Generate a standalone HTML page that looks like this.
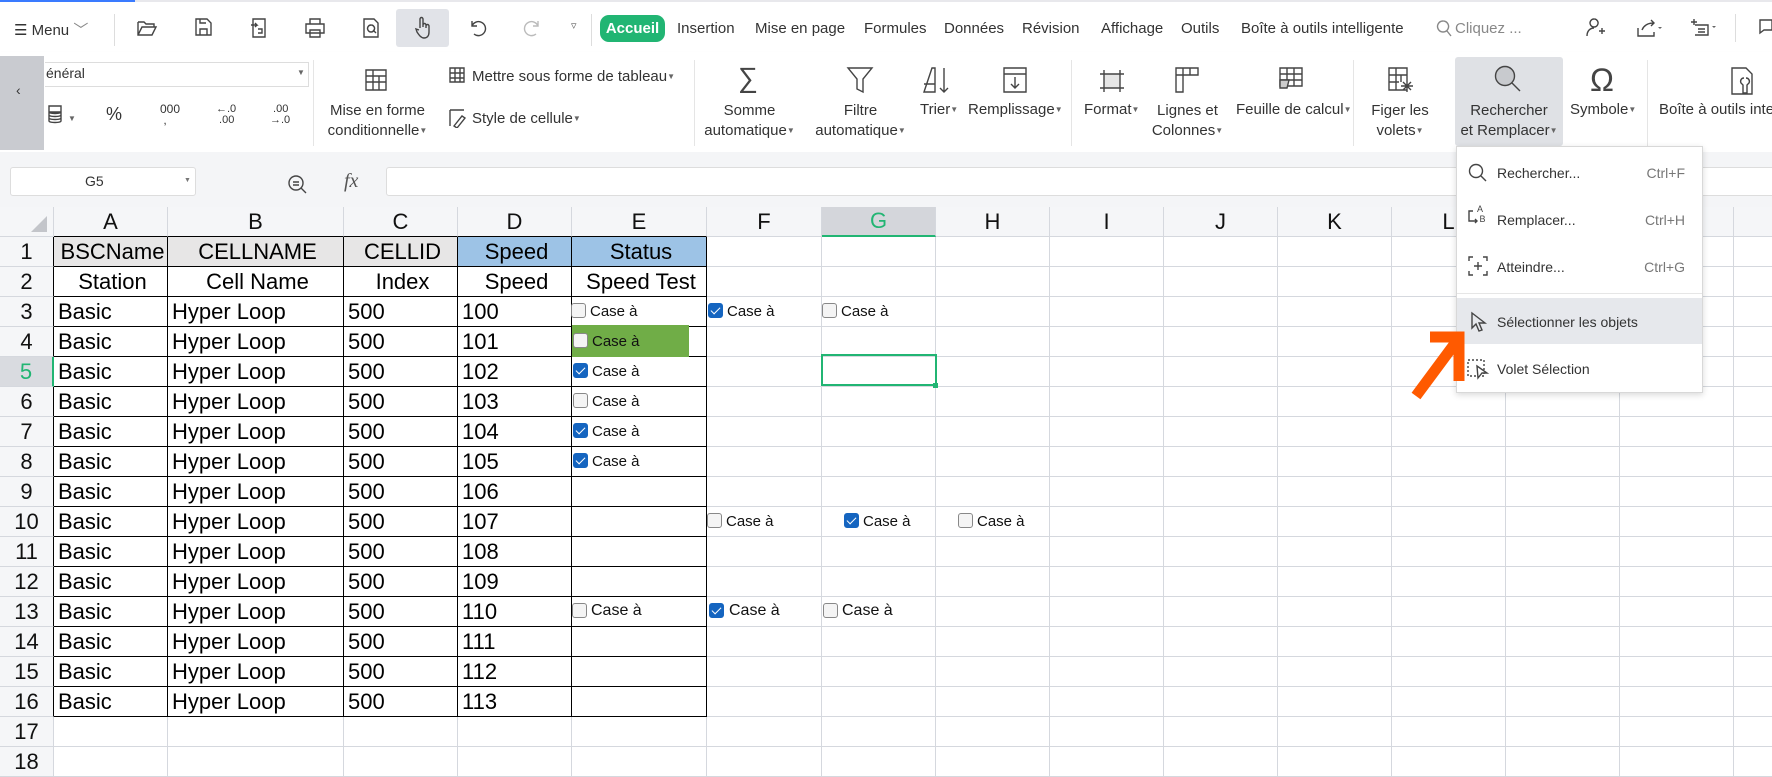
<!DOCTYPE html>
<html><head><meta charset="utf-8">
<style>
*{box-sizing:border-box;margin:0;padding:0}
body{width:1772px;height:772px;overflow:hidden;background:#fff;font-family:"Liberation Sans",sans-serif;color:#333;position:relative}
.a{position:absolute;white-space:nowrap}
.t{font-size:14px;color:#333}
.c{text-align:center}
svg{position:absolute;fill:none;stroke:#444;stroke-width:1.4}
table{position:absolute;left:0;top:207px;width:1848px;border-collapse:separate;border-spacing:0;table-layout:fixed;font-size:22px;color:#000}
td{height:30px;border-right:1px solid #d5d8de;border-bottom:1px solid #d5d8de;padding:0 0 0 4px;overflow:hidden;white-space:nowrap;line-height:28px}
tr.h td{height:29px;background:#f5f6f8;text-align:center;padding:0;color:#111}
td.r{background:#f5f6f8;text-align:center;padding:0;color:#111}
td.b{border-right:1px solid #000;border-bottom:1px solid #000}
td.bl{border-right:1px solid #000}
tr.h td.bt{border-bottom:1px solid #000}
td.g{background:#e7e6e6;text-align:center}
td.bl2{background:#9dc3e6;text-align:center}
.cb{position:absolute;width:15px;height:15px;border:1px solid #888;border-radius:3px;background:#f4f4f4}
.cb.k{background:#1565c0;border-color:#1565c0}
.cb.k:after{content:"";position:absolute;left:4px;top:1px;width:4px;height:8px;border:solid #fff;border-width:0 1.5px 1.5px 0;transform:rotate(45deg)}
.cl{position:absolute;font-size:15px;color:#111}
.mi{position:absolute;left:1497px;font-size:14px;color:#333}
.sc{position:absolute;right:87px;font-size:14px;color:#777}
.dd{font-size:8px;color:#666;vertical-align:2px}
</style></head><body>
<!-- top bar -->
<div class="a" style="left:0;top:0;width:1772px;height:2px;background:#e8e8ec"></div>
<div class="a" style="left:0;top:0;width:135px;height:2px;background:#3a7bff"></div>
<div class="a t" style="left:14px;top:19px;font-size:15px">☰ Menu <span style="color:#888">﹀</span></div>
<div class="a" style="left:114px;top:14px;width:1px;height:32px;background:#ddd"></div>
<svg style="left:136px;top:18px" width="22" height="20"><path d="M2 4h6l2 2h8v3M2 4v13h14l4-8H6l-4 8"/></svg>
<svg style="left:193px;top:17px" width="20" height="20"><path d="M3 2h11l4 4v12H3z M7 18v-6h7v6 M7 2v4h6"/></svg>
<svg style="left:249px;top:17px" width="20" height="22"><path d="M4 2h12v18H4z M2 8h6l-2-2m2 2-2 2 M9 12h4v4h-4"/></svg>
<svg style="left:304px;top:17px" width="22" height="22"><path d="M6 2h10v5H6z M2 7h18v9H2z M6 13h10v7H6z"/></svg>
<svg style="left:361px;top:17px" width="20" height="22"><path d="M3 2h10l4 4v14H3z M10 8a3.5 3.5 0 1 0 0.1 0 M12 13l3 3"/></svg>
<div class="a" style="left:396px;top:9px;width:53px;height:38px;background:#e1e3e8;border-radius:3px"></div>
<svg style="left:413px;top:16px" width="20" height="24"><path d="M7 12V3a1.5 1.5 0 0 1 3 0v8 M10 9a1.5 1.5 0 0 1 3 0v3 M13 10a1.5 1.5 0 0 1 3 0v6c0 4-2 6-5 6s-5-3-7-6l-1-3 3 1"/></svg>
<svg style="left:468px;top:18px" width="20" height="20"><path d="M4 3v5h5 M4 8a7 7 0 1 1 2 8"/></svg>
<svg style="left:522px;top:18px;stroke:#bbb" width="20" height="20"><path d="M16 3v5h-5 M16 8a7 7 0 1 0-2 8"/></svg>
<div class="a" style="left:571px;top:19px;font-size:11px;color:#666">▿</div>
<div class="a" style="left:591px;top:14px;width:1px;height:32px;background:#ddd"></div>
<div class="a" style="left:600px;top:15px;width:65px;height:27px;background:#21b573;border-radius:9px;color:#fff;font-weight:bold;font-size:15px;line-height:27px;text-align:center">Accueil</div>
<div class="a t" style="left:677px;top:20px;font-size:15px">Insertion</div>
<div class="a t" style="left:755px;top:20px;font-size:15px">Mise en page</div>
<div class="a t" style="left:864px;top:20px;font-size:15px">Formules</div>
<div class="a t" style="left:944px;top:20px;font-size:15px">Données</div>
<div class="a t" style="left:1022px;top:20px;font-size:15px">Révision</div>
<div class="a t" style="left:1101px;top:20px;font-size:15px">Affichage</div>
<div class="a t" style="left:1181px;top:20px;font-size:15px">Outils</div>
<div class="a t" style="left:1241px;top:20px;font-size:15px">Boîte à outils intelligente</div>
<svg style="left:1436px;top:19px;stroke:#888" width="16" height="18"><path d="M7 2a5.5 5.5 0 1 0 .1 0 M11 12l4 5"/></svg>
<div class="a t" style="left:1455px;top:20px;font-size:15px;color:#888">Cliquez ...</div>
<svg style="left:1585px;top:16px" width="20" height="22"><path d="M9 3a4 4 0 1 0 .1 0 M2 20c0-5 3-8 7-8 M14 15h6 M17 12v6"/></svg>
<svg style="left:1636px;top:18px" width="28" height="20"><path d="M2 10v8h16v-4 M6 12c2-5 6-7 12-7 M15 2l3 3-3 3"/><path d="M22 9l2 2 2-2" style="fill:#666;stroke:none"/></svg>
<svg style="left:1690px;top:16px" width="30" height="22"><path d="M4 3v6 M1 6h6 M5 9h13v10H5 M8 13h7 M8 16h7"/><path d="M22 10l2 2 2-2" style="fill:#666;stroke:none"/></svg>
<div class="a" style="left:1735px;top:14px;width:1px;height:28px;background:#ddd"></div>
<svg style="left:1758px;top:18px" width="14" height="18"><path d="M2 2h12v10H6l-4 3z"/></svg>

<!-- ribbon -->
<div class="a" style="left:0;top:52px;width:1772px;height:100px;background:#fff;box-shadow:0 2px 3px rgba(0,0,0,.08)"></div>
<div class="a" style="left:0;top:56px;width:44px;height:94px;background:#c9cbd0"></div>
<div class="a" style="left:16px;top:82px;font-size:14px;color:#333">‹</div>
<div class="a" style="left:45px;top:62px;width:264px;height:25px;border:1px solid #ddd;border-left:none"></div>
<div class="a t" style="left:46px;top:65px">énéral</div>
<div class="a" style="left:297px;top:68px;font-size:8px;color:#666">▼</div>
<svg style="left:46px;top:104px" width="18" height="20"><path d="M3 2h12v6H3z M3 8c0 2 12 2 12 0 M3 11c0 2 12 2 12 0 M3 14c0 2 12 2 12 0 M3 8v9c0 2 12 2 12 0V8"/></svg>
<div class="a dd" style="left:68px;top:114px">▼</div>
<div class="a" style="left:106px;top:104px;font-size:18px;color:#333">%</div>
<div class="a" style="left:160px;top:104px;font-size:12px;color:#333;line-height:11px">000<br>&nbsp;,</div>
<div class="a" style="left:216px;top:104px;font-size:11px;color:#333;line-height:11px">←.0<br>&nbsp;.00</div>
<div class="a" style="left:270px;top:104px;font-size:11px;color:#333;line-height:11px">&nbsp;.00<br>→.0</div>
<div class="a" style="left:313px;top:60px;width:1px;height:86px;background:#e5e5e5"></div>
<svg style="left:364px;top:68px" width="24" height="24"><path d="M2 2h20v20H2z M2 8h20 M2 14h20 M9 2v20 M15 8v14"/></svg>
<div class="a t c" style="left:320px;top:101px;width:115px;font-size:15px;line-height:20px">Mise en forme<br>conditionnelle<span class="dd">▼</span></div>
<svg style="left:448px;top:66px" width="20" height="20"><path d="M2 2h14v14H2z M2 7h14 M2 12h14 M7 2v14 M12 2v14"/></svg>
<div class="a t" style="left:472px;top:68px;font-size:15px">Mettre sous forme de tableau<span class="dd">▼</span></div>
<svg style="left:448px;top:108px" width="20" height="20"><path d="M2 2h14 M2 2v16 M6 18l8-10 3 2-8 10z"/></svg>
<div class="a t" style="left:472px;top:110px;font-size:15px">Style de cellule<span class="dd">▼</span></div>
<div class="a" style="left:694px;top:60px;width:1px;height:86px;background:#e5e5e5"></div>
<div class="a" style="left:738px;top:62px;font-size:28px;color:#444">∑</div>
<div class="a t c" style="left:697px;top:101px;width:105px;font-size:15px;line-height:20px">Somme<br>automatique<span class="dd">▼</span></div>
<svg style="left:846px;top:66px" width="28" height="28"><path d="M2 2h24l-9 11v13l-6-3V13z"/></svg>
<div class="a t c" style="left:808px;top:101px;width:105px;font-size:15px;line-height:20px">Filtre<br>automatique<span class="dd">▼</span></div>
<svg style="left:922px;top:66px" width="30" height="28"><path d="M2 26L10 2l3 0v24z M2 18h11 M22 2v24 M18 22l4 4 4-4"/></svg>
<div class="a t" style="left:920px;top:101px;font-size:15px">Trier<span class="dd">▼</span></div>
<svg style="left:1002px;top:66px" width="26" height="28"><path d="M2 2h22v24H2z M2 8h22 M13 11v11 M9 18l4 4 4-4"/></svg>
<div class="a t" style="left:968px;top:101px;font-size:15px">Remplissage<span class="dd">▼</span></div>
<div class="a" style="left:1071px;top:60px;width:1px;height:86px;background:#e5e5e5"></div>
<svg style="left:1098px;top:68px" width="28" height="26"><path d="M6 6h16v14H6z" style="fill:#e6e6e6;stroke:none"/><path d="M6 2v22 M22 2v22 M2 6h24 M2 20h24" /></svg>
<div class="a t" style="left:1084px;top:101px;font-size:15px">Format<span class="dd">▼</span></div>
<svg style="left:1174px;top:66px" width="26" height="28"><path d="M2 2h22v7H2z M2 9v17h7V2 M16 2v7"/></svg>
<div class="a t c" style="left:1140px;top:101px;width:95px;font-size:15px;line-height:20px">Lignes et<br>Colonnes<span class="dd">▼</span></div>
<svg style="left:1278px;top:66px" width="26" height="28"><path d="M2 2h22v18H2z M2 8h22 M2 14h22 M9 2v18 M16 2v18"/><path d="M2 14h9l-2 8H2z" style="fill:#ccc;stroke:#444"/></svg>
<div class="a t" style="left:1236px;top:101px;font-size:15px">Feuille de calcul<span class="dd">▼</span></div>
<div class="a" style="left:1353px;top:60px;width:1px;height:86px;background:#e5e5e5"></div>
<svg style="left:1387px;top:66px" width="30" height="28"><path d="M2 2h18v22H2z M2 9h18 M2 16h10 M9 2v22 M14 9v7 M20 14v12 M14 20h12 M16 16l8 8 M24 16l-8 8"/></svg>
<div class="a t c" style="left:1360px;top:101px;width:80px;font-size:15px;line-height:20px">Figer les<br>volets<span class="dd">▼</span></div>
<div class="a" style="left:1455px;top:57px;width:108px;height:89px;background:#dfe1e5;border-radius:3px"></div>
<svg style="left:1493px;top:64px" width="30" height="30"><circle cx="12" cy="12" r="9.5" style="fill:#c8cace"/><path d="M19 19l8 8"/></svg>
<div class="a t c" style="left:1455px;top:101px;width:108px;font-size:15px;line-height:20px">Rechercher<br>et Remplacer<span class="dd">▼</span></div>
<div class="a" style="left:1590px;top:62px;font-size:32px;color:#444">Ω</div>
<div class="a t" style="left:1570px;top:101px;font-size:15px">Symbole<span class="dd">▼</span></div>
<div class="a" style="left:1647px;top:60px;width:1px;height:86px;background:#e5e5e5"></div>
<svg style="left:1730px;top:66px" width="26" height="30"><path d="M2 2h14l6 6v20H2z M14 12c-3 0-4 3-3 5l2 2v8h4v-8l2-2c1-2 0-5-3-5"/></svg>
<div class="a t" style="left:1659px;top:101px;font-size:15px">Boîte à outils inte</div>

<!-- formula bar -->
<div class="a" style="left:0;top:152px;width:1772px;height:55px;background:#f4f5f7"></div>
<div class="a" style="left:10px;top:167px;width:186px;height:29px;background:#fff;border:1px solid #ddd;border-radius:3px"></div>
<div class="a t" style="left:85px;top:173px">G5</div>
<div class="a" style="left:184px;top:177px;font-size:7px;color:#777">▼</div>
<svg style="left:287px;top:174px" width="22" height="22"><circle cx="9" cy="9" r="7"/><path d="M14 14l5 5 M6 8h6 M6 11h6"/></svg>
<div class="a" style="left:344px;top:170px;font-size:20px;font-style:italic;color:#555;font-family:'Liberation Serif',serif">fx</div>
<div class="a" style="left:386px;top:167px;width:1400px;height:29px;background:#fff;border:1px solid #ddd;border-radius:3px"></div>

<!-- grid -->
<table>
<colgroup><col style="width:54px"><col style="width:114px"><col style="width:176px"><col style="width:114px"><col style="width:114px"><col style="width:135px"><col style="width:115px"><col style="width:114px"><col style="width:114px"><col style="width:114px"><col style="width:114px"><col style="width:114px"><col style="width:114px"><col style="width:114px"><col style="width:114px"><col style="width:114px"></colgroup>
<tr class="h"><td style="position:relative"><div style="position:absolute;right:6px;bottom:4px;width:0;height:0;border-left:16px solid transparent;border-bottom:16px solid #c3c5ca"></div></td><td class="bt">A</td><td class="bt">B</td><td class="bt">C</td><td class="bt">D</td><td class="bt">E</td><td>F</td><td style="background:#d4d6db;color:#21b573;border-bottom:2px solid #21b573">G</td><td>H</td><td>I</td><td>J</td><td>K</td><td>L</td><td>M</td><td>N</td><td>O</td></tr>
<tr><td class="r bl">1</td><td class="b g">BSCName</td><td class="b g">CELLNAME</td><td class="b g">CELLID</td><td class="b bl2">Speed</td><td class="b bl2">Status</td><td></td><td></td><td></td><td></td><td></td><td></td><td></td><td></td><td></td><td></td></tr>
<tr><td class="r bl">2</td><td class="b c">Station</td><td class="b c">Cell Name</td><td class="b c">Index</td><td class="b c">Speed</td><td class="b c">Speed Test</td><td></td><td></td><td></td><td></td><td></td><td></td><td></td><td></td><td></td><td></td></tr>
<tr><td class="r bl">3</td><td class="b">Basic</td><td class="b">Hyper Loop</td><td class="b">500</td><td class="b">100</td><td class="b"></td><td></td><td></td><td></td><td></td><td></td><td></td><td></td><td></td><td></td><td></td></tr>
<tr><td class="r bl">4</td><td class="b">Basic</td><td class="b">Hyper Loop</td><td class="b">500</td><td class="b">101</td><td class="b"></td><td></td><td></td><td></td><td></td><td></td><td></td><td></td><td></td><td></td><td></td></tr>
<tr><td class="r" style="background:#d9dbe0;color:#21b573;border-right:2px solid #21b573">5</td><td class="b">Basic</td><td class="b">Hyper Loop</td><td class="b">500</td><td class="b">102</td><td class="b"></td><td></td><td></td><td></td><td></td><td></td><td></td><td></td><td></td><td></td><td></td></tr>
<tr><td class="r bl">6</td><td class="b">Basic</td><td class="b">Hyper Loop</td><td class="b">500</td><td class="b">103</td><td class="b"></td><td></td><td></td><td></td><td></td><td></td><td></td><td></td><td></td><td></td><td></td></tr>
<tr><td class="r bl">7</td><td class="b">Basic</td><td class="b">Hyper Loop</td><td class="b">500</td><td class="b">104</td><td class="b"></td><td></td><td></td><td></td><td></td><td></td><td></td><td></td><td></td><td></td><td></td></tr>
<tr><td class="r bl">8</td><td class="b">Basic</td><td class="b">Hyper Loop</td><td class="b">500</td><td class="b">105</td><td class="b"></td><td></td><td></td><td></td><td></td><td></td><td></td><td></td><td></td><td></td><td></td></tr>
<tr><td class="r bl">9</td><td class="b">Basic</td><td class="b">Hyper Loop</td><td class="b">500</td><td class="b">106</td><td class="b"></td><td></td><td></td><td></td><td></td><td></td><td></td><td></td><td></td><td></td><td></td></tr>
<tr><td class="r bl">10</td><td class="b">Basic</td><td class="b">Hyper Loop</td><td class="b">500</td><td class="b">107</td><td class="b"></td><td></td><td></td><td></td><td></td><td></td><td></td><td></td><td></td><td></td><td></td></tr>
<tr><td class="r bl">11</td><td class="b">Basic</td><td class="b">Hyper Loop</td><td class="b">500</td><td class="b">108</td><td class="b"></td><td></td><td></td><td></td><td></td><td></td><td></td><td></td><td></td><td></td><td></td></tr>
<tr><td class="r bl">12</td><td class="b">Basic</td><td class="b">Hyper Loop</td><td class="b">500</td><td class="b">109</td><td class="b"></td><td></td><td></td><td></td><td></td><td></td><td></td><td></td><td></td><td></td><td></td></tr>
<tr><td class="r bl">13</td><td class="b">Basic</td><td class="b">Hyper Loop</td><td class="b">500</td><td class="b">110</td><td class="b"></td><td></td><td></td><td></td><td></td><td></td><td></td><td></td><td></td><td></td><td></td></tr>
<tr><td class="r bl">14</td><td class="b">Basic</td><td class="b">Hyper Loop</td><td class="b">500</td><td class="b">111</td><td class="b"></td><td></td><td></td><td></td><td></td><td></td><td></td><td></td><td></td><td></td><td></td></tr>
<tr><td class="r bl">15</td><td class="b">Basic</td><td class="b">Hyper Loop</td><td class="b">500</td><td class="b">112</td><td class="b"></td><td></td><td></td><td></td><td></td><td></td><td></td><td></td><td></td><td></td><td></td></tr>
<tr><td class="r bl">16</td><td class="b">Basic</td><td class="b">Hyper Loop</td><td class="b">500</td><td class="b">113</td><td class="b"></td><td></td><td></td><td></td><td></td><td></td><td></td><td></td><td></td><td></td><td></td></tr>
<tr><td class="r">17</td><td></td><td></td><td></td><td></td><td></td><td></td><td></td><td></td><td></td><td></td><td></td><td></td><td></td><td></td><td></td></tr>
<tr><td class="r">18</td><td></td><td></td><td></td><td></td><td></td><td></td><td></td><td></td><td></td><td></td><td></td><td></td><td></td><td></td><td></td></tr>
</table>

<!-- green cell & selection -->
<div class="a" style="left:572px;top:325px;width:117px;height:32px;background:#70ad47"></div>
<div class="a" style="left:821px;top:354px;width:116px;height:32px;border:2px solid #21b573"></div>
<div class="a" style="left:933px;top:383px;width:5px;height:5px;background:#21b573"></div>

<!-- checkboxes -->
<div class="cb" style="left:571px;top:303px"></div><div class="cl" style="left:590px;top:303px">Case à</div>
<div class="cb" style="left:573px;top:333px"></div><div class="cl" style="left:592px;top:333px">Case à</div>
<div class="cb k" style="left:573px;top:363px"></div><div class="cl" style="left:592px;top:363px">Case à</div>
<div class="cb" style="left:573px;top:393px"></div><div class="cl" style="left:592px;top:393px">Case à</div>
<div class="cb k" style="left:573px;top:423px"></div><div class="cl" style="left:592px;top:423px">Case à</div>
<div class="cb k" style="left:573px;top:453px"></div><div class="cl" style="left:592px;top:453px">Case à</div>
<div class="cb k" style="left:708px;top:303px"></div><div class="cl" style="left:727px;top:303px">Case à</div>
<div class="cb" style="left:822px;top:303px"></div><div class="cl" style="left:841px;top:303px">Case à</div>
<div class="cb" style="left:707px;top:513px"></div><div class="cl" style="left:726px;top:513px">Case à</div>
<div class="cb k" style="left:844px;top:513px"></div><div class="cl" style="left:863px;top:513px">Case à</div>
<div class="cb" style="left:958px;top:513px"></div><div class="cl" style="left:977px;top:513px">Case à</div>
<div class="cb" style="left:572px;top:603px"></div><div class="cl" style="left:591px;top:602px;font-size:16px">Case à</div>
<div class="cb k" style="left:709px;top:603px"></div><div class="cl" style="left:729px;top:602px;font-size:16px">Case à</div>
<div class="cb" style="left:823px;top:603px"></div><div class="cl" style="left:842px;top:602px;font-size:16px">Case à</div>

<!-- dropdown menu -->
<div class="a" style="left:1456px;top:146px;width:247px;height:247px;background:#fff;border:1px solid #d8d8d8;box-shadow:0 2px 6px rgba(0,0,0,.15)"></div>
<svg style="left:1467px;top:162px" width="22" height="22"><circle cx="9" cy="9" r="6.5"/><path d="M14 14l5 5"/></svg>
<div class="mi" style="top:165px">Rechercher...</div><div class="sc" style="top:165px">Ctrl+F</div>
<svg style="left:1467px;top:207px" width="24" height="24"><path d="M6 4H2v10h8 M8 12l2 2-2 2"/></svg>
<div class="a" style="left:1477px;top:204px;font-size:9px;color:#444;line-height:10px">A<br>&nbsp;B</div>
<div class="mi" style="top:212px">Remplacer...</div><div class="sc" style="top:212px">Ctrl+H</div>
<svg style="left:1467px;top:255px" width="22" height="22"><path d="M2 6V2h4 M16 2h4v4 M20 16v4h-4 M6 20H2v-4 M11 7v8 M7 11h8"/></svg>
<div class="mi" style="top:259px">Atteindre...</div><div class="sc" style="top:259px">Ctrl+G</div>
<div class="a" style="left:1457px;top:293px;width:245px;height:1px;background:#e6e6e6"></div>
<div class="a" style="left:1457px;top:298px;width:245px;height:46px;background:#e6e8ec"></div>
<svg style="left:1469px;top:311px" width="20" height="22"><path d="M3 2l13 10h-6l3 7-3 1-3-7-4 4z"/></svg>
<div class="mi" style="top:314px">Sélectionner les objets</div>
<svg style="left:1466px;top:358px" width="24" height="22"><path d="M2 2h16v16H2z" stroke-dasharray="2 2"/><path d="M11 8l10 7h-5l-4 5z" style="fill:#fff"/></svg>
<div class="mi" style="top:361px">Volet Sélection</div>

<!-- orange arrow -->
<svg style="left:1400px;top:320px;stroke:#ff5a00;stroke-width:11;stroke-linecap:butt" width="80" height="90"><path d="M16 76L56 22 M30 17h29v44"/></svg>
</body></html>
